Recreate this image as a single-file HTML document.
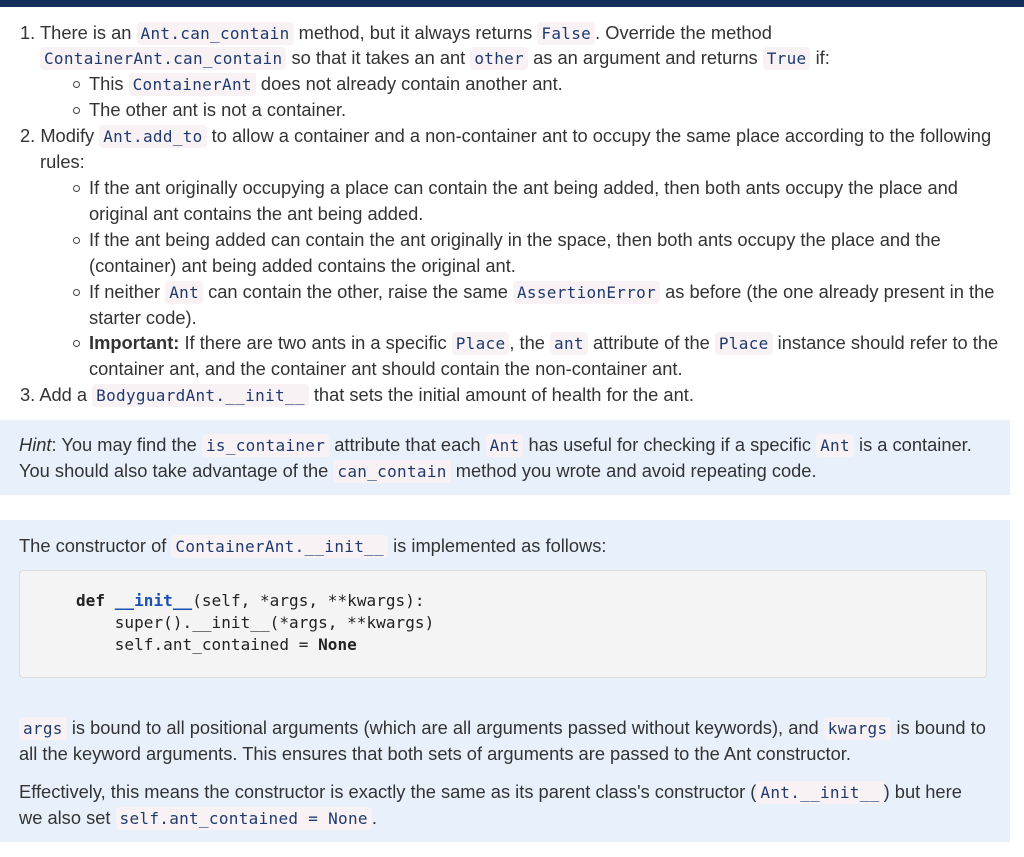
<!DOCTYPE html>
<html><head><meta charset="utf-8"><style>
body{margin:0;width:1024px;height:857px;background:#fff;position:relative;overflow:hidden;font-family:"Liberation Sans",Arial,sans-serif;font-size:18.3px;color:#333;}
.l{position:absolute;line-height:26px;white-space:nowrap;}
code{font-family:"DejaVu Sans Mono","Liberation Mono",monospace;font-size:16px;letter-spacing:0.3px;color:#1f3a6e;background:#f8f2f4;padding:2px 4px;border-radius:4px;}
.box{position:absolute;left:0;width:1010px;background:#e8f1fb;}
.pre{position:absolute;left:19px;top:570px;width:966px;height:106px;background:#f4f4f4;border:1px solid #ddd;border-radius:4px;}
.cl{position:absolute;left:76px;font-family:"DejaVu Sans Mono","Liberation Mono",monospace;font-size:16px;letter-spacing:0.05px;line-height:22px;color:#222;white-space:pre;}
.b{font-weight:bold}.fn{color:#1b4fb0;font-weight:bold}
.bul{position:absolute;width:5px;height:5px;border:1.3px solid #444;border-radius:50%;}
</style></head><body>
<div style="position:absolute;left:0;top:0;width:1024px;height:7px;background:#13305c"></div>
<div class="l" style="left:20px;top:20px">1. There is an <code>Ant.can_contain</code> method, but it always returns <code>False</code>. Override the method</div>
<div class="l" style="left:40px;top:45px"><code>ContainerAnt.can_contain</code> so that it takes an ant <code>other</code> as an argument and returns <code>True</code> if:</div>
<div class="bul" style="left:73px;top:81px"></div>
<div class="l" style="left:89px;top:71px">This <code>ContainerAnt</code> does not already contain another ant.</div>
<div class="bul" style="left:73px;top:107px"></div>
<div class="l" style="left:89px;top:97px">The other ant is not a container.</div>
<div class="l" style="left:20px;top:123px">2. Modify <code>Ant.add_to</code> to allow a container and a non-container ant to occupy the same place according to the following</div>
<div class="l" style="left:40px;top:149px">rules:</div>
<div class="bul" style="left:73px;top:185px"></div>
<div class="l" style="left:89px;top:175px">If the ant originally occupying a place can contain the ant being added, then both ants occupy the place and</div>
<div class="l" style="left:89px;top:201px">original ant contains the ant being added.</div>
<div class="bul" style="left:73px;top:237px"></div>
<div class="l" style="left:89px;top:227px">If the ant being added can contain the ant originally in the space, then both ants occupy the place and the</div>
<div class="l" style="left:89px;top:253px">(container) ant being added contains the original ant.</div>
<div class="bul" style="left:73px;top:289px"></div>
<div class="l" style="left:89px;top:279px">If neither <code>Ant</code> can contain the other, raise the same <code>AssertionError</code> as before (the one already present in the</div>
<div class="l" style="left:89px;top:305px">starter code).</div>
<div class="bul" style="left:73px;top:340px"></div>
<div class="l" style="left:89px;top:330px"><b>Important:</b> If there are two ants in a specific <code>Place</code>, the <code>ant</code> attribute of the <code>Place</code> instance should refer to the</div>
<div class="l" style="left:89px;top:356px">container ant, and the container ant should contain the non-container ant.</div>
<div class="l" style="left:20px;top:382px">3. Add a <code>BodyguardAnt.__init__</code> that sets the initial amount of health for the ant.</div>

<div class="box" style="top:420px;height:75px"></div>
<div class="l" style="left:19px;top:432px"><i>Hint</i>: You may find the <code>is_container</code> attribute that each <code>Ant</code> has useful for checking if a specific <code>Ant</code> is a container.</div>
<div class="l" style="left:19px;top:458px">You should also take advantage of the <code>can_contain</code> method you wrote and avoid repeating code.</div>

<div class="box" style="top:520px;height:322px"></div>
<div class="l" style="left:19px;top:533px">The constructor of <code>ContainerAnt.__init__</code> is implemented as follows:</div>
<div class="pre"></div>
<div class="cl" style="top:590px"><span class="b">def</span> <span class="fn">__init__</span>(self, *args, **kwargs):</div>
<div class="cl" style="top:612px">    super().__init__(*args, **kwargs)</div>
<div class="cl" style="top:634px">    self.ant_contained = <span class="b">None</span></div>
<div class="l" style="left:19px;top:715px"><code>args</code> is bound to all positional arguments (which are all arguments passed without keywords), and <code>kwargs</code> is bound to</div>
<div class="l" style="left:19px;top:741px">all the keyword arguments. This ensures that both sets of arguments are passed to the Ant constructor.</div>
<div class="l" style="left:19px;top:779px">Effectively, this means the constructor is exactly the same as its parent class's constructor (<code>Ant.__init__</code>) but here</div>
<div class="l" style="left:19px;top:805px">we also set <code>self.ant_contained = None</code>.</div>
</body></html>
